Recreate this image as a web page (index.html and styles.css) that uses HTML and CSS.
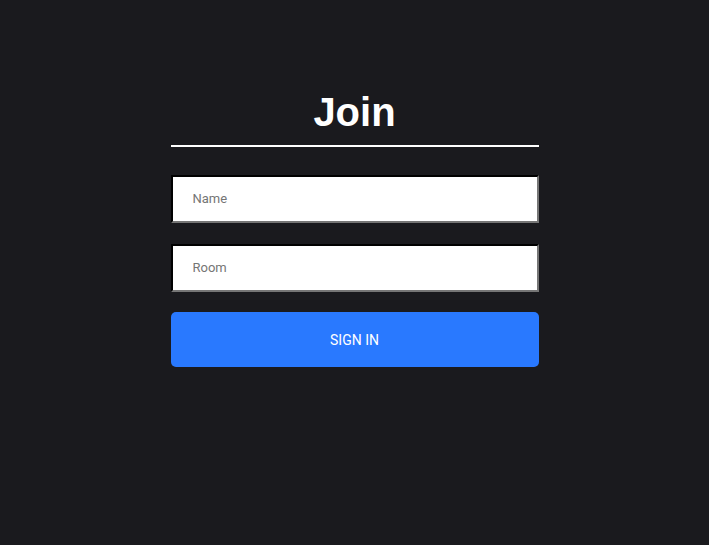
FILE: index.html
```html
<!DOCTYPE html>
<html>
<head>
<meta charset="utf-8">
<link rel="stylesheet" href="styles.css">
</head>
<body>
<div class="page">
  <div class="join">
    <h1 class="title">Join</h1>
    <div class="field"><input class="input" placeholder="Name" type="text"></div>
    <div class="field"><input class="input" placeholder="Room" type="text"></div>
    <button class="btn" type="submit">SIGN IN</button>
  </div>
</div>
</body>
</html>
```
FILE: styles.css
```css
html, body {
  margin: 0;
  padding: 0;
  background: #1a1a1e;
  height: 100%;
}
.page {
  display: flex;
  justify-content: center;
  padding-top: 89px;
}
.join {
  width: 368px;
  display: flex;
  flex-direction: column;
}
.title {
  margin: 0;
  font-family: "Liberation Sans", Arial, sans-serif;
  font-weight: bold;
  font-size: 40px;
  line-height: 46px;
  color: #ffffff;
  text-align: center;
  padding-bottom: 10px;
  border-bottom: 2px solid #ffffff;
}
.field {
  margin-top: 28px;
  display: flex;
}
.field + .field {
  margin-top: 21px;
}
.input {
  width: 100%;
  box-sizing: border-box;
  height: 48px;
  margin: 0;
  padding: 0 20px 2px;
  border: 2px inset #767676;
  border-top-color: #1a1a1e;
  border-left-color: #1a1a1e;
  background: #ffffff;
  font-family: Roboto, "Liberation Sans", sans-serif;
  font-size: 13px;
  color: #333;
  outline: none;
}
.input::placeholder {
  color: #757575;
}
.btn {
  margin-top: 20px;
  height: 55px;
  border: none;
  border-radius: 5px;
  background: #2979ff;
  color: #ffffff;
  font-family: Roboto, "Liberation Sans", sans-serif;
  font-size: 14px;
  cursor: pointer;
}
```
